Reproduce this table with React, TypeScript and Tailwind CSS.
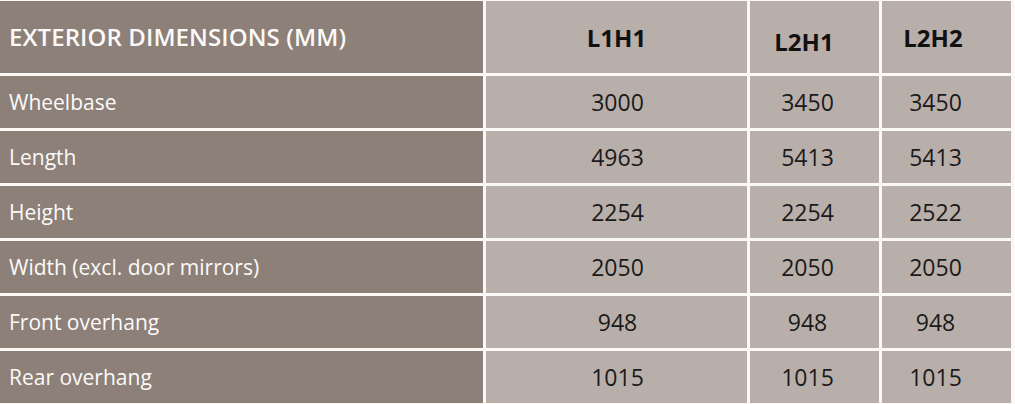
import React from "react";

const rows: [string, string, string, string][] = [
  ["Wheelbase", "3000", "3450", "3450"],
  ["Length", "4963", "5413", "5413"],
  ["Height", "2254", "2254", "2522"],
  ["Width (excl. door mirrors)", "2050", "2050", "2050"],
  ["Front overhang", "948", "948", "948"],
  ["Rear overhang", "1015", "1015", "1015"],
];

export default function App() {
  return (
    <div className="w-[1015px] h-[404px] bg-[#fbf8f6] pt-[1px] pr-[4px] overflow-hidden">
      <div
        className="grid grid-cols-[483px_261px_129px_129px] grid-rows-[72px_repeat(6,52px)] gap-[3px]"
        style={{ fontFamily: '"Open Sans", "Liberation Sans", sans-serif' }}
      >
        <div className="bg-[#8c8078] flex items-center pl-[9px] text-[#fcfaf8] font-semibold text-[24px] tracking-[0.1px]">
          EXTERIOR DIMENSIONS (MM)
        </div>
        <div className="bg-[#b9afaa] flex items-center justify-center pt-[1px] text-[#111] font-bold text-[24px]">
          L1H1
        </div>
        <div className="bg-[#b9afaa] flex items-center justify-center pt-[9px] pr-[21px] text-[#111] font-bold text-[24px]">
          L2H1
        </div>
        <div className="bg-[#b9afaa] flex items-center justify-center pt-[1px] pr-[27px] text-[#111] font-bold text-[24px]">
          L2H2
        </div>
        {rows.map((r) => (
          <React.Fragment key={r[0]}>
            <div className="bg-[#8c8078] flex items-center pl-[9px] pt-[2px] text-[#fcfaf8] text-[21px]">
              {r[0]}
            </div>
            <div className="bg-[#b9afaa] flex items-center justify-center pl-[2px] text-[#1a1a1a] text-[23px]">
              {r[1]}
            </div>
            <div className="bg-[#b9afaa] flex items-center justify-center pr-[14px] text-[#1a1a1a] text-[23px]">
              {r[2]}
            </div>
            <div className="bg-[#b9afaa] flex items-center justify-center pr-[22px] text-[#1a1a1a] text-[23px]">
              {r[3]}
            </div>
          </React.Fragment>
        ))}
      </div>
    </div>
  );
}
